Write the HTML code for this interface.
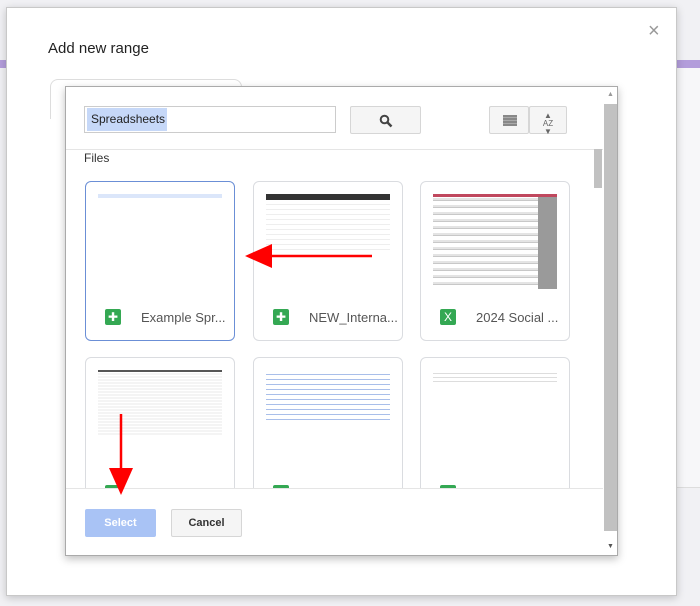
<!DOCTYPE html>
<html><head><style>
*{box-sizing:border-box;margin:0;padding:0}
body{width:700px;height:606px;background:#f1f1f4;position:relative;overflow:hidden;font-family:"Liberation Sans",Arial,sans-serif}
.abs{position:absolute}
.card{position:absolute;width:150px;height:160px;border:1px solid #dadce0;border-radius:6px;background:#fff;overflow:hidden}
.card .nm{position:absolute;left:55px;top:128px;font-size:13px;color:#555;white-space:nowrap}
.card .ic{position:absolute;left:19px;top:127px;width:16px;height:16px;background:#34a853;border-radius:2px;color:#fff;font-size:12px;text-align:center;line-height:16px}
.th{position:absolute;left:12px;top:12px;width:124px;height:95px}
.btn{position:absolute;border:1px solid #d6d6d6;background:#f5f5f5;border-radius:2px}
</style></head><body>
<div class="abs" style="left:0;top:60px;width:700px;height:8px;background:#b39ddb"></div>
<div class="abs" style="left:677px;top:230px;width:23px;height:48px;border:1px solid #ddd;background:#fff;border-radius:4px"></div>
<div class="abs" style="left:677px;top:68px;width:23px;height:420px;background:#f7f7f9;border-bottom:1px solid #ddd"></div>
<div class="abs" style="left:6px;top:7px;width:671px;height:589px;background:#fff;border:1px solid #c8c8c8;box-shadow:0 2px 8px rgba(0,0,0,.2)"></div>
<div class="abs" style="left:48px;top:40px;font-size:15px;color:#222">Add new range</div>
<div class="abs" style="left:648px;top:20px;font-size:20px;color:#999">×</div>
<div class="abs" style="left:50px;top:79px;width:192px;height:40px;border:1px solid #ddd;border-bottom:none;border-radius:8px 8px 0 0"></div>
<div class="abs" style="left:65px;top:86px;width:553px;height:470px;background:#fff;border:1px solid #aaa;box-shadow:0 3px 8px rgba(0,0,0,.25);overflow:hidden">
 <div class="abs" style="left:18px;top:19px;width:252px;height:27px;border:1px solid #ccc"></div>
 <div class="abs" style="left:21px;top:21px;width:80px;height:23px;background:#c6d8f8;font-size:12px;line-height:23px;padding-left:4px;color:#222">Spreadsheets</div>
 <div class="btn" style="left:284px;top:19px;width:71px;height:28px">
  <svg class="abs" style="left:28px;top:7px" width="14" height="14" viewBox="0 0 14 14"><circle cx="5.5" cy="5.5" r="3.8" fill="none" stroke="#444" stroke-width="2"/><path d="M8.3 8.3L12.5 12.5" stroke="#444" stroke-width="2.5"/></svg>
 </div>
 <div class="btn" style="left:423px;top:19px;width:40px;height:28px"><div class="abs" style="left:13px;top:8px;width:14px;height:11px;background:repeating-linear-gradient(#888 0 2px,#aaa 2px 3px)"></div></div>
 <div class="btn" style="left:463px;top:19px;width:38px;height:28px;font-size:8px;color:#666;text-align:center;line-height:8px;padding-top:5px">▲<br>AZ<br>▼</div>
 <div class="abs" style="left:0;top:62px;width:537px;height:1px;background:#e5e5e5"></div>
 <div class="abs" style="left:18px;top:64px;font-size:12px;color:#333">Files</div>

 <div class="card" style="left:19px;top:94px;border-color:#6b8fd6;border-width:1.5px"><div class="th" style="height:4px;background:#dbe6fa"></div><div class="ic">✚</div><div class="nm">Example Spr...</div></div>
 <div class="card" style="left:187px;top:94px"><div class="th" style="height:60px;background:linear-gradient(#333 0 6px,transparent 6px),repeating-linear-gradient(#eee 0 1px,#fff 1px 5px)"></div><div class="ic">✚</div><div class="nm">NEW_Interna...</div></div>
 <div class="card" style="left:354px;top:94px"><div class="th" style="background:linear-gradient(#c0485e 0 3px,transparent 3px),linear-gradient(90deg,transparent 0 105px,#9a9a9a 105px),repeating-linear-gradient(#fff 0 4px,#e4e4e4 4px 6px,#c8c8c8 6px 7px)"></div><div class="ic">X</div><div class="nm">2024 Social ...</div></div>
 <div class="card" style="left:19px;top:270px;height:160px"><div class="th" style="top:12px;height:65px;background:linear-gradient(#555 0 2px,transparent 2px),repeating-linear-gradient(#f4f4f4 0 2px,#fff 2px 3px)"></div><div class="ic">✚</div><div class="nm">[SHARED] P...</div></div>
 <div class="card" style="left:187px;top:270px"><div class="th" style="top:12px;height:50px;background:repeating-linear-gradient(#fff 0 4px,#a9bfea 4px 5px)"></div><div class="ic">✚</div><div class="nm">LIFO Edit...</div></div>
 <div class="card" style="left:354px;top:270px"><div class="th" style="top:12px;height:14px;background:repeating-linear-gradient(#fff 0 3px,#ddd 3px 4px)"></div><div class="ic">✚</div><div class="nm">PRPPO Load...</div></div>

 <div class="abs" style="left:537px;top:0;width:16px;height:470px;background:#fff"></div>
 <div class="abs" style="left:538px;top:17px;width:14px;height:427px;background:#c1c1c1"></div>
 <div class="abs" style="left:528px;top:62px;width:8px;height:39px;background:#c1c1c1"></div>
 <div class="abs" style="left:541px;top:4px;font-size:7px;color:#999">▲</div>
 <div class="abs" style="left:541px;top:456px;font-size:7px;color:#555">▼</div>

 <div class="abs" style="left:0;top:401px;width:537px;height:69px;background:#fff;border-top:1px solid #e5e5e5"></div>
 <div class="abs" style="left:19px;top:422px;width:71px;height:28px;background:#a9c3f5;border-radius:2px;color:#fff;font-size:11px;font-weight:bold;text-align:center;line-height:28px">Select</div>
 <div class="btn" style="left:105px;top:422px;width:71px;height:28px;font-size:11px;font-weight:bold;color:#333;text-align:center;line-height:26px">Cancel</div>
</div>
<svg class="abs" style="left:0;top:0" width="700" height="606">
 <path d="M272 256H372" stroke="#f00" stroke-width="2.5"/><path d="M245 256L272 244V268Z" fill="#f00"/>
 <path d="M121 414V470" stroke="#f00" stroke-width="2.5"/><path d="M109 468H133L121 495Z" fill="#f00"/>
</svg>
</body></html>
